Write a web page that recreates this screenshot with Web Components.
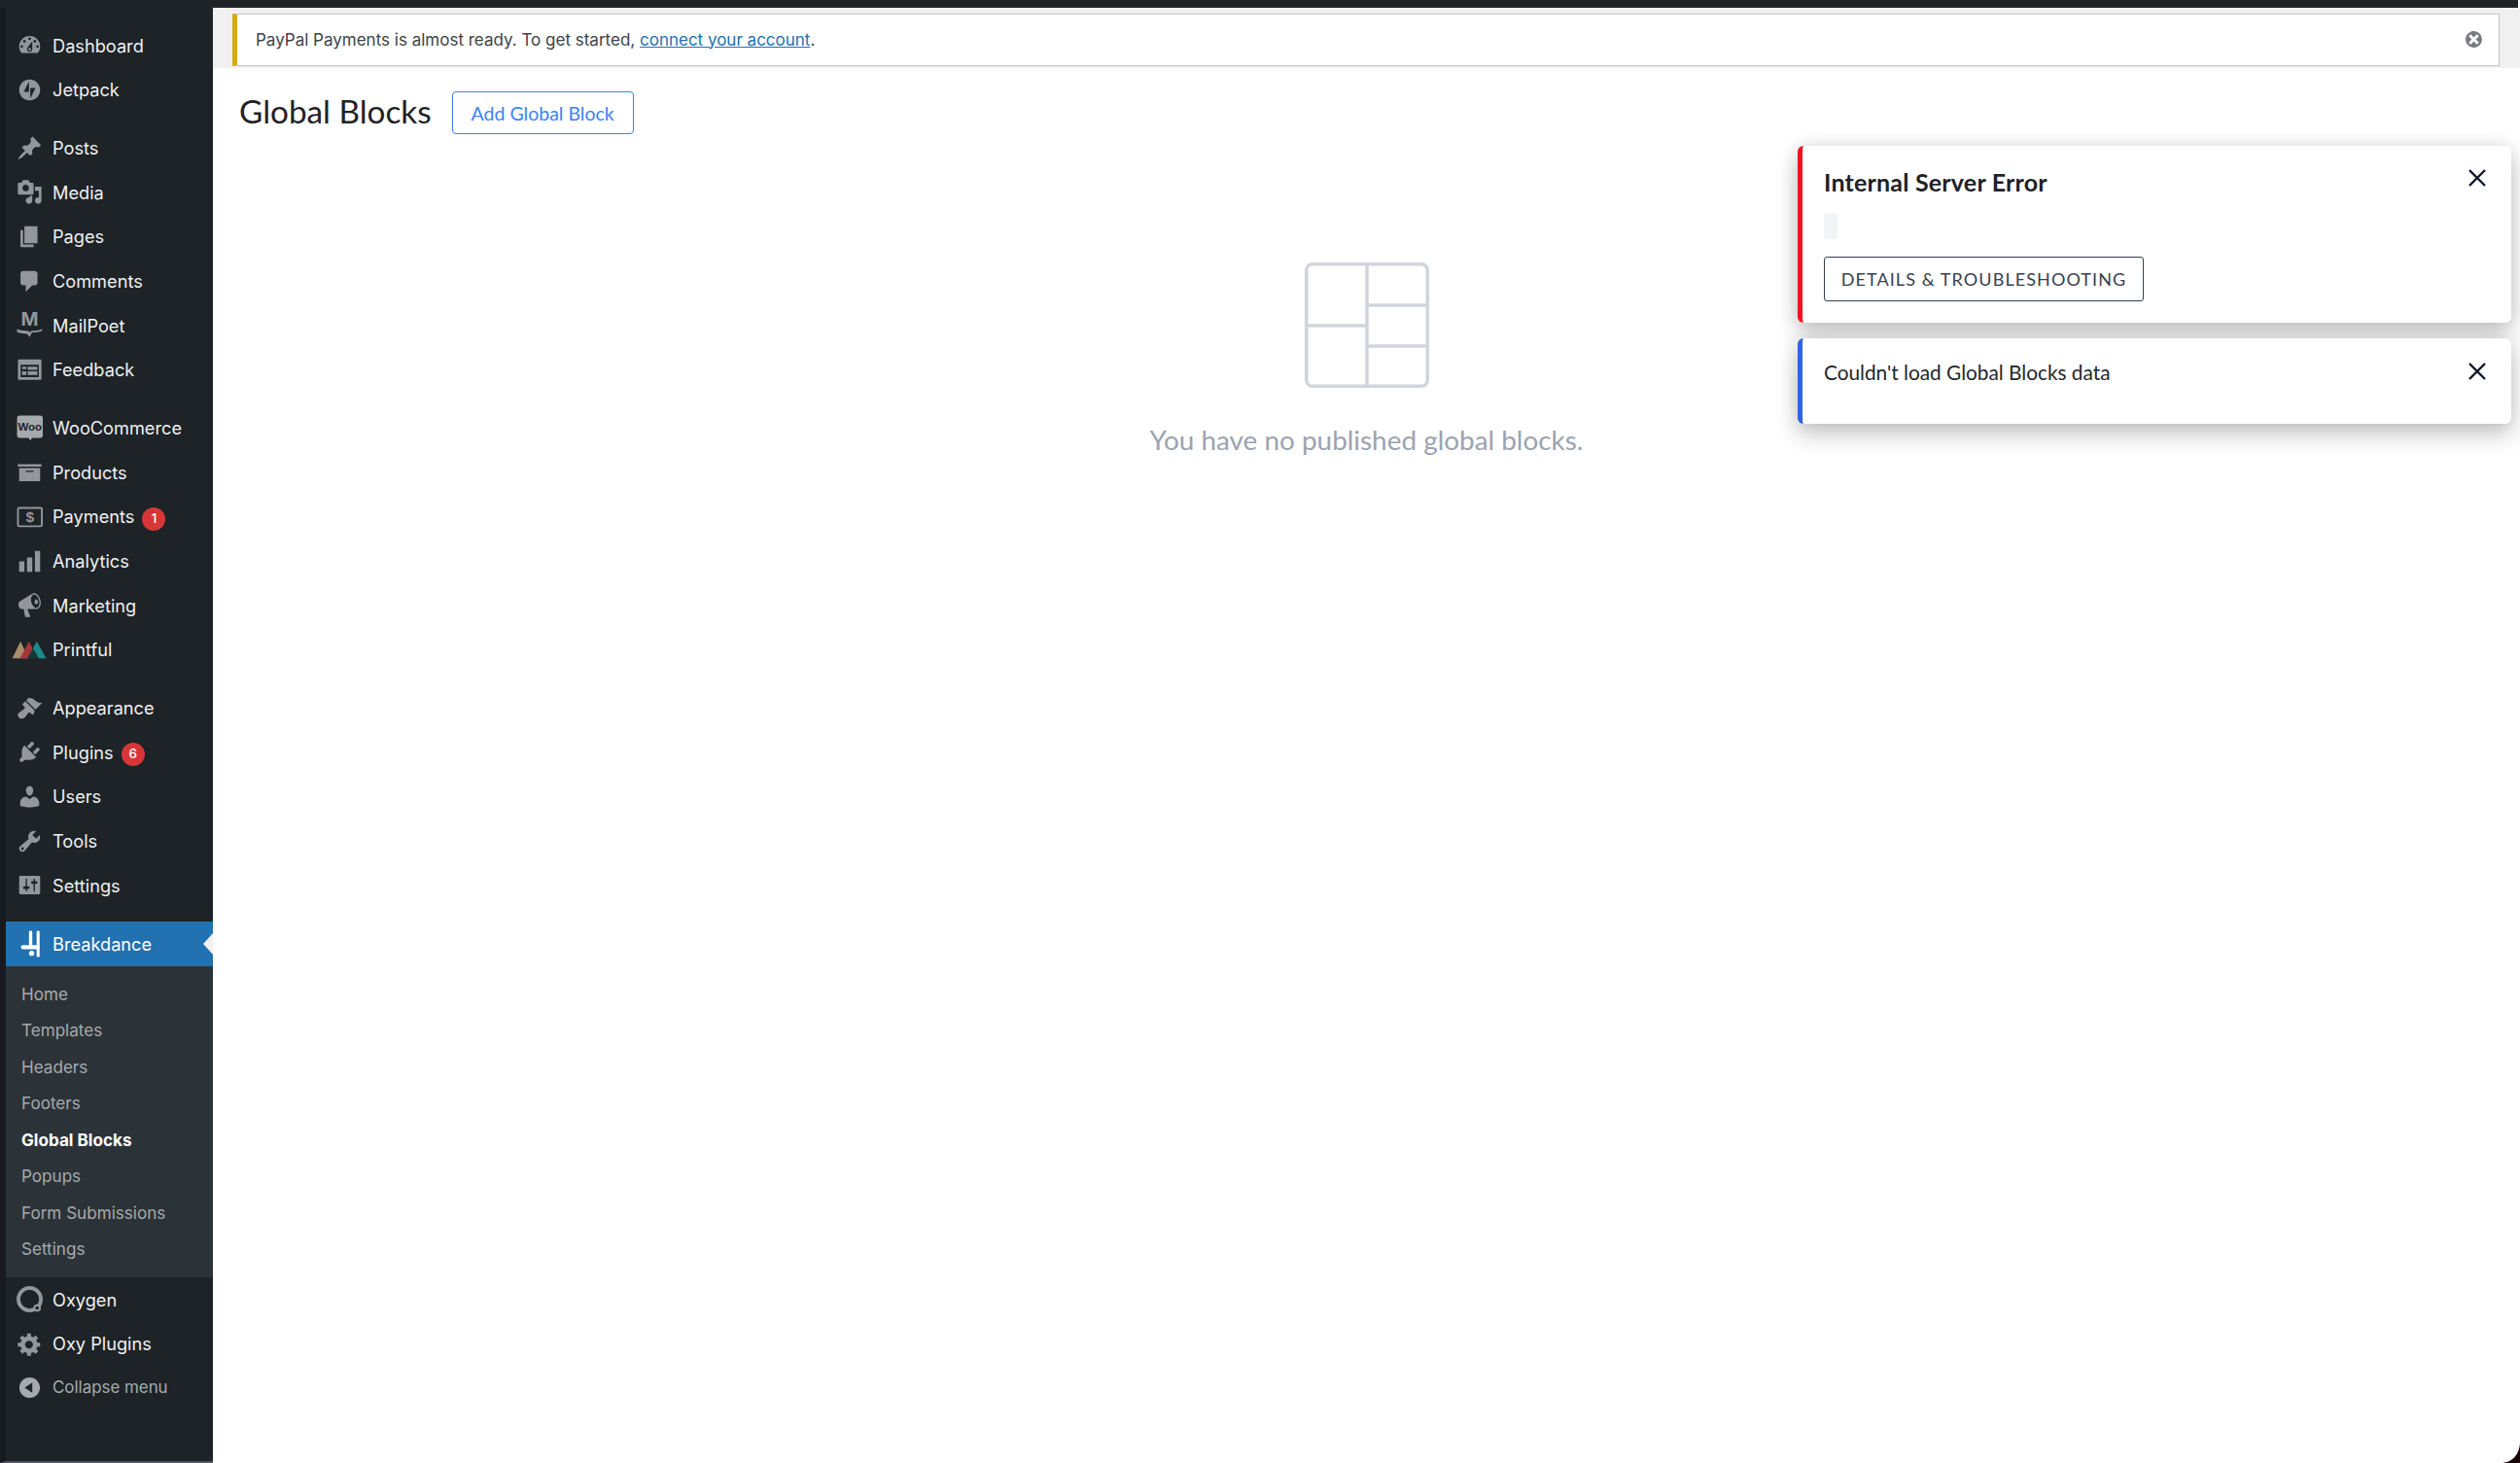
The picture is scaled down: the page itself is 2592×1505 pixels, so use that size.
<!DOCTYPE html>
<html lang="en"><head><meta charset="utf-8"><title>Global Blocks</title>
<style>
html,body{margin:0;height:100%;overflow:hidden;background:#fff}
body{font-family:Inter,"Liberation Sans",sans-serif}
</style></head><body>
<wp-app>
  <wp-sidebar slot="side">
    <wp-menu-item icon="dashboard" label="Dashboard"></wp-menu-item>
    <wp-menu-item icon="jetpack" label="Jetpack" sep></wp-menu-item>
    <wp-menu-item icon="post" label="Posts"></wp-menu-item>
    <wp-menu-item icon="media" label="Media"></wp-menu-item>
    <wp-menu-item icon="page" label="Pages"></wp-menu-item>
    <wp-menu-item icon="comments" label="Comments"></wp-menu-item>
    <wp-menu-item icon="mailpoet" label="MailPoet"></wp-menu-item>
    <wp-menu-item icon="feedback" label="Feedback" sep></wp-menu-item>
    <wp-menu-item icon="woo" label="WooCommerce"></wp-menu-item>
    <wp-menu-item icon="products" label="Products"></wp-menu-item>
    <wp-menu-item icon="payments" label="Payments" badge="1"></wp-menu-item>
    <wp-menu-item icon="analytics" label="Analytics"></wp-menu-item>
    <wp-menu-item icon="marketing" label="Marketing"></wp-menu-item>
    <wp-menu-item icon="printful" label="Printful" sep></wp-menu-item>
    <wp-menu-item icon="appearance" label="Appearance"></wp-menu-item>
    <wp-menu-item icon="plugins" label="Plugins" badge="6"></wp-menu-item>
    <wp-menu-item icon="users" label="Users"></wp-menu-item>
    <wp-menu-item icon="tools" label="Tools"></wp-menu-item>
    <wp-menu-item icon="settings" label="Settings" sep></wp-menu-item>
    <wp-menu-item icon="breakdance" label="Breakdance" current></wp-menu-item>
    <wp-submenu>
      <wp-sub-item>Home</wp-sub-item>
      <wp-sub-item>Templates</wp-sub-item>
      <wp-sub-item>Headers</wp-sub-item>
      <wp-sub-item>Footers</wp-sub-item>
      <wp-sub-item active>Global Blocks</wp-sub-item>
      <wp-sub-item>Popups</wp-sub-item>
      <wp-sub-item>Form Submissions</wp-sub-item>
      <wp-sub-item>Settings</wp-sub-item>
    </wp-submenu>
    <wp-menu-item icon="oxygen" label="Oxygen"></wp-menu-item>
    <wp-menu-item icon="gear" label="Oxy Plugins"></wp-menu-item>
    <wp-menu-item icon="collapse" label="Collapse menu" dim></wp-menu-item>
  </wp-sidebar>
  <wp-notice slot="notice">PayPal Payments is almost ready. To get started, <a href="#">connect your account</a>.</wp-notice>
  <bd-page-head slot="main" heading="Global Blocks" action="Add Global Block"></bd-page-head>
  <bd-empty slot="main">You have no published global blocks.</bd-empty>
  <bd-toast-stack slot="overlay">
    <bd-toast kind="error" heading="Internal Server Error" action="Details &amp; Troubleshooting"></bd-toast>
    <bd-toast kind="info" message="Couldn't load Global Blocks data"></bd-toast>
  </bd-toast-stack>
</wp-app>
<script>
const ICONS={
dashboard:'<path fill-rule="evenodd" d="M3.76 16h12.48c1.1-1.37 1.76-3.11 1.76-5 0-4.42-3.58-8-8-8s-8 3.58-8 8c0 1.89.66 3.63 1.76 5zM10 4c.55 0 1 .45 1 1s-.45 1-1 1-1-.45-1-1 .45-1 1-1zM6 6c.55 0 1 .45 1 1s-.45 1-1 1-1-.45-1-1 .45-1 1-1zm8 0c.55 0 1 .45 1 1s-.45 1-1 1-1-.45-1-1 .45-1 1-1zm-5.37 5.55L12 7v6c0 1.1-.9 2-2 2s-2-.9-2-2c0-.57.24-1.08.63-1.45zM4 10c.55 0 1 .45 1 1s-.45 1-1 1-1-.45-1-1 .45-1 1-1zm12 0c.55 0 1 .45 1 1s-.45 1-1 1-1-.45-1-1 .45-1 1-1zm-5 3c0-.55-.45-1-1-1s-1 .45-1 1 .45 1 1 1 1-.45 1-1z"/>',
jetpack:'<path fill-rule="evenodd" transform="translate(2 2) scale(.5)" d="M16 0C7.2 0 0 7.2 0 16s7.2 16 16 16 16-7.2 16-16S24.8 0 16 0zM15 19H7l8-16v16zm2 10V13h8l-8 16z"/>',
post:'<path d="M10.44 3.02l1.82-1.82 6.36 6.35-1.83 1.82c-1.05-.68-2.48-.57-3.41.36l-.75.75c-.92.93-1.04 2.35-.35 3.41l-1.83 1.82-2.41-2.41-2.8 2.79c-.42.42-3.38 2.71-3.8 2.29s1.86-3.39 2.28-3.81l2.79-2.79L4.1 9.36l1.83-1.82c1.05.69 2.48.57 3.4-.36l.75-.75c.93-.92 1.05-2.35.36-3.41z"/>',
media:'<path d="M13 11V4c0-.55-.45-1-1-1h-1.67L9 1H5L3.67 3H2c-.55 0-1 .45-1 1v7c0 .55.45 1 1 1h10c.55 0 1-.45 1-1zM7 4.5c1.38 0 2.5 1.12 2.5 2.5S8.38 9.5 7 9.5 4.5 8.38 4.5 7 5.62 4.5 7 4.5zM14 6h5v10.5c0 1.38-1.12 2.5-2.5 2.5S14 17.88 14 16.5s1.12-2.5 2.5-2.5c.17 0 .34.02.5.05V9h-3V6zm-4 8.05V13h2v3.5c0 1.38-1.12 2.5-2.5 2.5S7 17.88 7 16.5 8.12 14 9.5 14c.17 0 .34.02.5.05z"/>',
page:'<path d="M6 15V2h10v13H6zm-1 1h8v2H3V5h2v11z"/>',
comments:'<path d="M5 2h9c1.1 0 2 .9 2 2v7c0 1.1-.9 2-2 2h-2l-5 5v-5H5c-1.1 0-2-.9-2-2V4c0-1.1.9-2 2-2z"/>',
mailpoet:'<text x="10" y="10.700" text-anchor="middle" font-family="Inter,sans-serif" font-weight="700" font-size="14.300">M</text><path d="M.4 13c2.800 1.200 6 1.300 8.600 1.400l1 1.200 1-1.200c2.600-.1 5.800-.2 8.600-1.400v1.200c-2.800 1.200-5.400 1.300-7.800 1.400L10 19l-1.800-2.400c-2.400-.1-5-.2-7.800-1.400z"/>',
feedback:'<path fill-rule="evenodd" d="M1.600 2H18.500a.5.500 0 0 1 .5.500v14.500a.5.500 0 0 1-.5.500H1.600a.5.500 0 0 1-.5-.5V2.500a.5.500 0 0 1 .5-.5zM3.100 6.200v9.300H17V6.200zM4.300 7.600h3.200v1.900H4.300zm0 3.600h3.200v2.600H4.300zM8.500 7.600h7.400v2.400H8.500zm0 3.600h7.400v2.600H8.500z"/>',
woo:'<path d="M2.400.4H18A2 2 0 0 1 20 2.400V15.400a2 2 0 0 1-2 2H11.500l-.6 2-1.900-2H2.400a2 2 0 0 1-2-2V2.400a2 2 0 0 1 2-2z" style="fill:#a7aaad"/><text x="10.200" y="11.600" text-anchor="middle" font-family="Liberation Sans,sans-serif" font-weight="700" font-size="8.500" style="fill:#1d2327">Woo</text>',
products:'<path d="M19 4v2H1V4h18zM2 7h16v10H2V7zm11 3V9H7v1h6z"/>',
payments:'<rect x="1.100" y="3.300" width="18.200" height="14" rx="1" fill="none" stroke="currentColor" stroke-width="1.400"/><text x="10.200" y="14.400" text-anchor="middle" font-family="Liberation Sans,sans-serif" font-weight="700" font-size="11.500">$</text>',
analytics:'<path d="M18 18V2h-4v16h4zm-6 0V7H8v11h4zm-6 0v-8H2v8h4z"/>',
marketing:'<path d="M18.150 5.940c.46 1.620.38 3.220-.02 4.480-.42 1.280-1.260 2.180-2.300 2.480-.16.06-.26.06-.4.06-.06.02-.12.02-.18.02-.06.02-.14.02-.22.02h-6.800l2.220 5.500c.02.14-.06.26-.14.34-.08.10-.24.16-.34.16H6.950c-.10 0-.26-.06-.34-.16-.08-.08-.16-.20-.14-.34l-1-5.500H4.250l-.02-.02c-.50.06-1.080-.18-1.540-.62s-.88-1.080-1.060-1.880c-.24-.80-.20-1.560-.02-2.200.18-.62.58-1.080 1.060-1.300l.02-.02 9-5.400c.10-.06.18-.10.24-.16.06-.04.14-.08.24-.12.16-.08.28-.12.50-.18 1.040-.30 2.240.10 3.220.98s1.840 2.240 2.260 3.860zm-2.580 5.980h-.02c.40-.10.74-.34 1.040-.70.58-.70.86-1.760.86-3.040 0-.64-.10-1.300-.26-1.960-.34-1.360-1.020-2.500-1.780-3.240s-1.680-1.100-2.460-.88c-.82.22-1.400.96-1.700 2-.32 1.040-.28 2.360.06 3.720.38 1.360 1 2.500 1.800 3.240.78.74 1.620 1.100 2.460.86z"/><ellipse cx="15" cy="7.500" rx="1.300" ry="2"/>',
printful:'<path fill="#a98c6c" d="M-3.300 16.500 3.100 3.500 9 16.500z"/><path fill="#a4353b" d="M2.600 16.500 9.500 3.500 13.500 11.500 10.500 16.500z"/><path fill="#163838" d="M12.600 8.700 17 16.500H8z"/><path fill="#1a8b8b" d="M15.400 3.500 22.600 16.500H17L12.600 8.700z"/>',
appearance:'<path d="M14.480 11.060L7.410 3.990l1.500-1.500c.5-.56 2.300-.47 3.510.32 1.210.8 1.430 1.280 2.910 2.100 1.180.64 2.450 1.260 4.450.85zm-.71.71L6.700 4.700 4.930 6.470c-.39.39-.39 1.020 0 1.410l1.060 1.060c.39.39.39 1.030 0 1.420-.6.6-1.430 1.110-2.210 1.690-.35.26-.7.53-1.010.84C1.430 13.230 1 14.260 1 15c0 .75.25 1.500.86 2.140.64.61 1.390.86 2.140.86.74 0 1.770-.43 2.530-1.200.31-.31.58-.66.84-1.010.58-.78 1.090-1.610 1.690-2.210.39-.39 1.030-.39 1.420 0l1.060 1.060c.39.39 1.020.39 1.410 0z"/>',
plugins:'<path d="M13.110 4.360L9.870 7.600 8 5.730l3.240-3.240c.35-.34 1.050-.2 1.560.32.52.51.66 1.210.31 1.550zm-8 1.770l.91-1.120 9.010 9.010-1.190.84c-.71.71-2.630 1.160-3.820 1.160H6.140L4.900 17.260c-.59.59-1.540.59-2.120 0-.59-.58-.59-1.530 0-2.120l1.240-1.240v-3.880c0-1.130.4-3.190 1.090-3.890zm7.260 3.970l3.240-3.240c.34-.35 1.040-.21 1.550.31.52.51.66 1.210.31 1.550l-3.240 3.250z"/>',
users:'<path d="M10 9.250c-2.270 0-2.730-3.440-2.730-3.440C7 4.020 7.820 2 9.970 2c2.160 0 2.980 2.020 2.710 3.810 0 0-.41 3.440-2.680 3.440zm0 2.570L12.720 10c2.390 0 4.520 2.330 4.520 4.530v2.490s-3.650 1.130-7.240 1.130c-3.650 0-7.240-1.130-7.240-1.130v-2.490c0-2.250 1.940-4.480 4.470-4.480z"/>',
tools:'<path d="M16.680 9.770c-1.340 1.340-3.300 1.670-4.950.99l-5.410 6.520c-.99.99-2.590.99-3.580 0s-.99-2.590 0-3.570l6.520-5.420c-.68-1.650-.35-3.610.99-4.950 1.280-1.280 3.120-1.620 4.720-1.060l-2.890 2.890 2.820 2.820 2.860-2.870c.53 1.580.18 3.390-1.080 4.650zM3.810 16.210c.4.39 1.040.39 1.430 0 .4-.4.4-1.040 0-1.430-.39-.4-1.030-.4-1.430 0-.39.39-.39 1.030 0 1.430z"/>',
settings:'<path d="M18 16V4c0-.55-.45-1-1-1H3c-.55 0-1 .45-1 1v12c0 .55.45 1 1 1h14c.55 0 1-.45 1-1zM8 11h1c.55 0 1 .45 1 1s-.45 1-1 1H8v1.500c0 .28-.22.5-.5.5s-.5-.22-.5-.5V13H6c-.55 0-1-.45-1-1s.45-1 1-1h1V5.500c0-.28.22-.5.5-.5s.5.22.5.5V11zm5-2h-1c-.55 0-1-.45-1-1s.45-1 1-1h1V5.500c0-.28.22-.5.5-.5s.5.22.5.5V7h1c.55 0 1 .45 1 1s-.45 1-1 1h-1v5.500c0 .28-.22.5-.5.5s-.5-.22-.5-.5V9z"/>',
breakdance:'<rect x="15.300" y=".4" width="2.300" height="20" rx="1"/><rect x="9.500" y=".4" width="2.500" height="12.600" rx="1"/><rect x="3.300" y="11.300" width="14.300" height="3.200" rx="1.600"/><circle cx="11.500" cy="17.500" r="2"/>',
oxygen:'<circle cx="10" cy="10" r="8.600" fill="none" stroke="currentColor" stroke-width="2.800"/><circle cx="15.700" cy="16.700" r="2.100" style="fill:#1d2327" stroke="currentColor" stroke-width="1.500"/>',
gear:'<path d="M18 12h-2.180c-.17.7-.44 1.350-.81 1.930l1.540 1.540-2.100 2.100-1.540-1.540c-.58.36-1.230.63-1.910.79V19H8v-2.180c-.68-.16-1.330-.43-1.910-.79l-1.540 1.540-2.120-2.120 1.540-1.540c-.36-.58-.63-1.230-.79-1.910H1V9.030h2.170c.16-.7.44-1.350.8-1.940L2.430 5.550l2.100-2.100 1.540 1.540c.58-.37 1.240-.64 1.930-.81V2h3v2.180c.68.16 1.330.43 1.910.79l1.540-1.540 2.120 2.120-1.540 1.540c.36.59.64 1.240.8 1.940H18V12zm-8.500 1.500c1.660 0 3-1.340 3-3s-1.340-3-3-3-3 1.340-3 3 1.340 3 3 3z"/>',
collapse:'<path d="M10 2.160c4.330 0 7.840 3.510 7.840 7.840s-3.510 7.840-7.840 7.840S2.160 14.330 2.160 10 5.710 2.160 10 2.160zm2 11.720V6.120L6.180 9.970z"/>'
};
function def(name,css,html,setup){
  customElements.define(name,class extends HTMLElement{
    connectedCallback(){
      if(this.shadowRoot)return;
      const r=this.attachShadow({mode:'open'});
      r.innerHTML='<style>'+css+'</style>'+(typeof html==='function'?html(this):html);
      if(setup)setup(r,this);
    }
  });
}
const esc=s=>(s||'').replace(/&/g,'&amp;').replace(/</g,'&lt;');
def('wp-app',`
:host{display:grid;grid-template-columns:219px 1fr;grid-template-rows:8px 1fr;width:100%;height:100vh;position:relative;overflow:hidden;background:#fff}
.top{grid-column:1/3;background:#1d2327;margin-right:2px}
.corner{position:absolute;right:0;bottom:0;width:20px;height:22px}
main{min-width:0;display:flex;flex-direction:column}
`,`<div class="top"></div><slot name="side"></slot><main><slot name="notice"></slot><slot name="main"></slot></main><slot name="overlay"></slot>
<svg class="corner" viewBox="0 0 20 22"><path d="M20 0V22H0C12 22 20 13 20 0Z" fill="#1c0306"/></svg>`);
def('wp-sidebar',`
:host{display:flex;flex-direction:column;background:#1d2327;border-left:6px solid #171b1f;border-bottom:2px solid #50575e;padding-top:16px;min-height:0}
`,`<slot></slot>`);
def('wp-menu-item',`
:host{display:flex;align-items:center;height:45.6px;flex:none;color:#f0f0f1;font:400 18.2px/1 Inter,"Liberation Sans",sans-serif;position:relative}
:host([sep]){margin-bottom:14.4px}
:host([current]){background:#2271b1;color:#fff;height:46px}
:host([dim]){color:#a7aaad;font-size:16.9px}
.ic{width:48px;flex:none;display:flex;justify-content:center;color:#93979b}
:host([current]) .ic{color:#fff}
:host([dim]) .ic{color:#a7aaad}
svg{display:block;width:27px;height:27px;fill:currentColor;overflow:visible}
.b{display:inline-flex;align-items:center;justify-content:center;width:24px;height:24px;border-radius:50%;background:#d63638;color:#fff;font-size:13.500px;font-weight:500;margin-left:8px;position:relative;top:2px}
:host([current])::after{content:"";position:absolute;right:0;top:12px;border:11px solid transparent;border-right:10px solid #f0f0f1;border-left:0}
`,h=>`<span class="ic"><svg viewBox="0 0 20 20">${ICONS[h.getAttribute('icon')]}</svg></span><span>${esc(h.getAttribute('label'))}</span>${h.hasAttribute('badge')?`<span class="b">${h.getAttribute('badge')}</span>`:''}`);
def('wp-submenu',`
:host{display:block;background:#2c3338;padding:9.800px 0 10.200px;flex:none}
`,`<slot></slot>`);
def('wp-sub-item',`
:host{display:flex;align-items:center;height:37.500px;padding-left:16px;color:#a7aaad;font:400 17.100px/1 Inter,"Liberation Sans",sans-serif}
:host([active]){color:#fff;font-weight:700}
`,`<slot></slot>`);
def('wp-notice',`
:host{display:block;background:#f0f0f1;padding:6px 21px 2px 20px;height:62px;box-sizing:border-box;flex:none}
.box{height:54px;box-sizing:border-box;background:#fff;border:1px solid #c3c4c7;border-left:5px solid #dba617;display:flex;align-items:center;padding:0 19px;justify-content:space-between;font:400 17px/1 Inter,"Liberation Sans",sans-serif;color:#3c434a}
::slotted(a){color:#2271b1}
svg{width:21px;height:21px;fill:#787c82;margin:-2px -4px 0 0}
`,`<div class="box"><span><slot></slot></span><svg viewBox="0 0 20 20"><path d="M10 2c4.420 0 8 3.580 8 8s-3.580 8-8 8-8-3.580-8-8 3.580-8 8-8zm5 11l-3-3 3-3-2-2-3 3-3-3-2 2 3 3-3 3 2 2 3-3 3 3z"/></svg></div>`);
def('bd-page-head',`
:host{display:flex;align-items:flex-start;gap:21px;padding:24px 0 0 27px;flex:none;font-family:Lato,"Open Sans",sans-serif}
h1{margin:0;font-size:33.300px;font-weight:400;color:#1f2227;line-height:40px}
button{all:unset;box-sizing:border-box;width:187px;height:44px;text-align:center;border:1px solid #3b82f6;border-radius:4px;color:#3b82f6;font-size:19.500px;line-height:41px}
`,h=>`<h1>${esc(h.getAttribute('heading'))}</h1><button>${esc(h.getAttribute('action'))}</button>`);
def('bd-empty',`
:host{display:flex;flex-direction:column;align-items:center;padding-top:132px;font:400 27.900px/40px Lato,"Open Sans",sans-serif;color:#9ca3af}
svg{width:128px;height:129px;display:block;margin-bottom:33px}
`,`<svg viewBox="0 0 128 129" fill="none" stroke="#d1d5db" stroke-width="3.500"><rect x="1.750" y="1.750" width="124.500" height="125.500" rx="6"/><path d="M64 2V127M2 65H64M64 44H126M64 86H126"/></svg><span><slot></slot></span>`);
def('bd-toast-stack',`
:host{position:absolute;top:150px;right:9px;width:734px;display:flex;flex-direction:column;gap:16px}
`,`<slot></slot>`);
def('bd-toast',`
:host{display:block;position:relative;box-sizing:border-box;background:#fff;border-radius:6px;border-left:5px solid #3062e6;padding:23px 30px 41px 22px;box-shadow:0 12px 24px rgba(0,0,0,.2),0 0 18px rgba(0,0,0,.12);font-family:Lato,"Open Sans",sans-serif;color:#1f2937}
:host([kind=error]){border-left-color:#f5101f;padding:23px 30px 22px 22px}
h2{margin:0 0 18px;font-size:25px;font-weight:700;line-height:28px;letter-spacing:.2px;color:#1f2227}
.msg{font-size:20.800px;line-height:24px;color:#24272c}
.ph{width:14px;height:27px;background:#f3f4f6;border-radius:3px;margin-bottom:18px}
button{all:unset;display:block;box-sizing:border-box;width:329px;height:46px;text-align:center;border:1px solid #374151;border-radius:3px;color:#374151;font-size:18px;line-height:44px;letter-spacing:1.100px;text-transform:uppercase}
svg{position:absolute;top:24px;right:26px;width:18px;height:18px;stroke:#111827;stroke-width:2.400;fill:none}
:host([kind=info]) svg{top:25px}
`,h=>{const a=h.getAttribute('heading');return (a?`<h2>${esc(a)}</h2><div class="ph"></div><button>${esc(h.getAttribute('action'))}</button>`:`<div class="msg">${esc(h.getAttribute('message'))}</div>`)+`<svg viewBox="0 0 18 18"><path d="M1 1 17 17M17 1 1 17"/></svg>`});
</script>
</body></html>
